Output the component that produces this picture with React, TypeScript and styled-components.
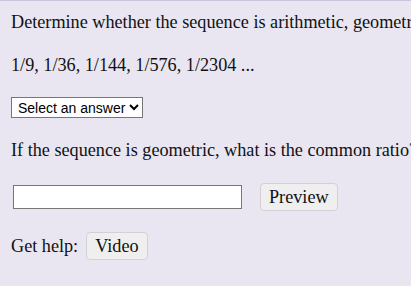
import React from "react";
import styled, { createGlobalStyle } from "styled-components";

const Global = createGlobalStyle`
  html, body { margin: 0; padding: 0; background: #e9e6f1; }
  body { font-family: "Liberation Serif", "Times New Roman", serif; color: #111; }
`;

const Page = styled.div`
  border-top: 1px solid #c9c5dd;
  padding: 10px 11px 0;
  min-height: 275px;
  font-size: 18.2px;
  white-space: nowrap;
  overflow: hidden;
`;

const Para = styled.p<{ top: number }>`
  margin: 0;
  line-height: 22px;
  padding-top: ${(p) => p.top}px;
`;

const Select = styled.select`
  font-family: "Liberation Sans", Arial, sans-serif;
  font-size: 14px;
  height: 21px;
  margin-top: 21px;
  padding: 0 0 0 2px;
  border: 1px solid #767676;
  border-radius: 0;
  background: #fff;
  color: #000;
  display: block;
`;

const Row = styled.div<{ gap: number; top: number }>`
  display: flex;
  align-items: center;
  gap: ${(p) => p.gap}px;
  margin-top: ${(p) => p.top}px;
`;

const Input = styled.input`
  width: 229px;
  height: 24px;
  box-sizing: border-box;
  border: 1px solid #767676;
  background: #fff;
  margin: 0 0 0 2px;
  padding: 0;
`;

const Button = styled.button`
  font-family: "Liberation Serif", "Times New Roman", serif;
  font-size: 18.2px;
  color: #111;
  background: #efefef;
  border: 1px solid #d2d2d6;
  border-radius: 4px;
  height: 28px;
  padding: 0 8px;
  line-height: 26px;
`;

export default function App() {
  return (
    <>
      <Global />
      <Page>
        <Para top={0}>Determine whether the sequence is arithmetic, geometric, or neither.</Para>
        <Para top={21}>1/9, 1/36, 1/144, 1/576, 1/2304 ...</Para>
        <Select defaultValue="">
          <option value="">Select an answer</option>
          <option>Arithmetic</option>
          <option>Geometric</option>
          <option>Neither</option>
        </Select>
        <Para top={21}>If the sequence is geometric, what is the common ratio?</Para>
        <Row gap={18} top={22}>
          <Input type="text" />
          <Button>Preview</Button>
        </Row>
        <Row gap={8} top={21}>
          <span>Get help:</span>
          <Button>Video</Button>
        </Row>
      </Page>
    </>
  );
}
